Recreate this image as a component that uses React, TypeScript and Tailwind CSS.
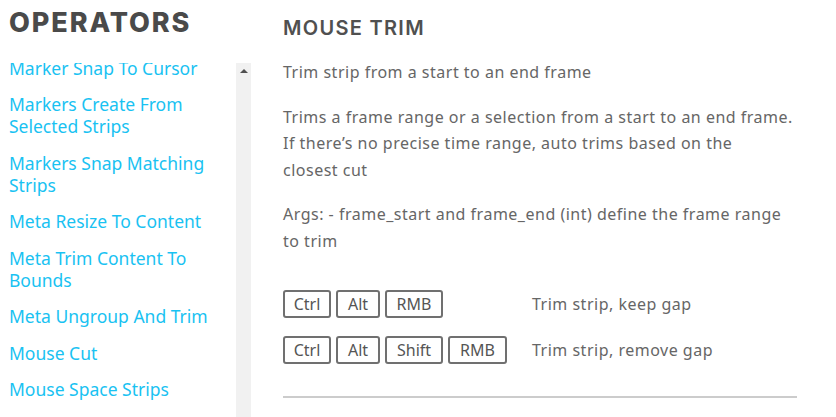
import React from "react";

const links: string[][] = [
  ["Marker Snap To Cursor"],
  ["Markers Create From", "Selected Strips"],
  ["Markers Snap Matching", "Strips"],
  ["Meta Resize To Content"],
  ["Meta Trim Content To", "Bounds"],
  ["Meta Ungroup And Trim"],
  ["Mouse Cut"],
  ["Mouse Space Strips"],
];

const body = { fontFamily: '"Noto Sans", "Open Sans", sans-serif' };
const head = { fontFamily: 'Inter, "Noto Sans", sans-serif' };

function Key({ label, w }: { label: string; w: string }) {
  return (
    <span
      className={`inline-flex h-[28px] items-center justify-center rounded-[3px] border-2 border-[#707070] text-[16px] text-[#555] ${w}`}
    >
      {label}
    </span>
  );
}

export default function App() {
  return (
    <div className="flex h-[417px] w-[836px] overflow-hidden bg-white" style={body}>
      <aside className="flex w-[251px] shrink-0 flex-col">
        <h1
          className="h-[63px] pl-[9px] pt-[7px] text-[27px] font-extrabold leading-[32px] tracking-[1.9px] text-[#4a4a4a]"
          style={head}
        >
          OPERATORS
        </h1>
        <div className="flex min-h-0 flex-1">
          <div className="min-w-0 flex-1 overflow-hidden">
            <ul className="mt-[-6.5px] flex flex-col gap-[14.5px] pl-[9px]">
              {links.map((l, i) => (
                <li key={i} className="text-[17.5px] leading-[22px] text-[#19c2f2]">
                  {l.map((line, j) => (
                    <div key={j}>{line}</div>
                  ))}
                </li>
              ))}
            </ul>
          </div>
          <div className="flex w-[15px] shrink-0 justify-center bg-[#f1f1f1] pt-[6px]">
            <div className="h-0 w-0 border-x-[4px] border-b-[4px] border-x-transparent border-b-[#505050]" />
          </div>
        </div>
      </aside>
      <main className="ml-[32px] w-[514px] shrink-0 tracking-[0.5px]">
        <h2
          className="mt-[14px] text-[20px] font-semibold leading-[28px] tracking-[1.3px] text-[#505050]"
          style={head}
        >
          MOUSE TRIM
        </h2>
        <div className="mt-[17px] text-[16px] leading-[26.5px] text-[#666]">
          <p>Trim strip from a start to an end frame</p>
          <p className="mt-[18px]">
            Trims a frame range or a selection from a start to an end frame. If there’s no precise
            time range, auto trims based on the
            <br />
            closest cut
          </p>
          <p className="mt-[18px]">
            Args: - frame_start and frame_end (int) define the frame range to trim
          </p>
        </div>
        <div className="mt-[36px] flex flex-col gap-[18px] tracking-normal">
          <div className="flex items-center">
            <div className="flex w-[249px] gap-[5px]">
              <Key label="Ctrl" w="w-[48px]" />
              <Key label="Alt" w="w-[44px]" />
              <Key label="RMB" w="w-[58px]" />
            </div>
            <span className="text-[16px] tracking-[0.5px] text-[#666]">Trim strip, keep gap</span>
          </div>
          <div className="flex items-center">
            <div className="flex w-[249px] gap-[5px]">
              <Key label="Ctrl" w="w-[48px]" />
              <Key label="Alt" w="w-[44px]" />
              <Key label="Shift" w="w-[58px]" />
              <Key label="RMB" w="w-[59px]" />
            </div>
            <span className="text-[16px] tracking-[0.5px] text-[#666]">Trim strip, remove gap</span>
          </div>
        </div>
        <hr className="mt-[32px] border-0 border-t-2 border-[#cccccc]" />
      </main>
    </div>
  );
}
